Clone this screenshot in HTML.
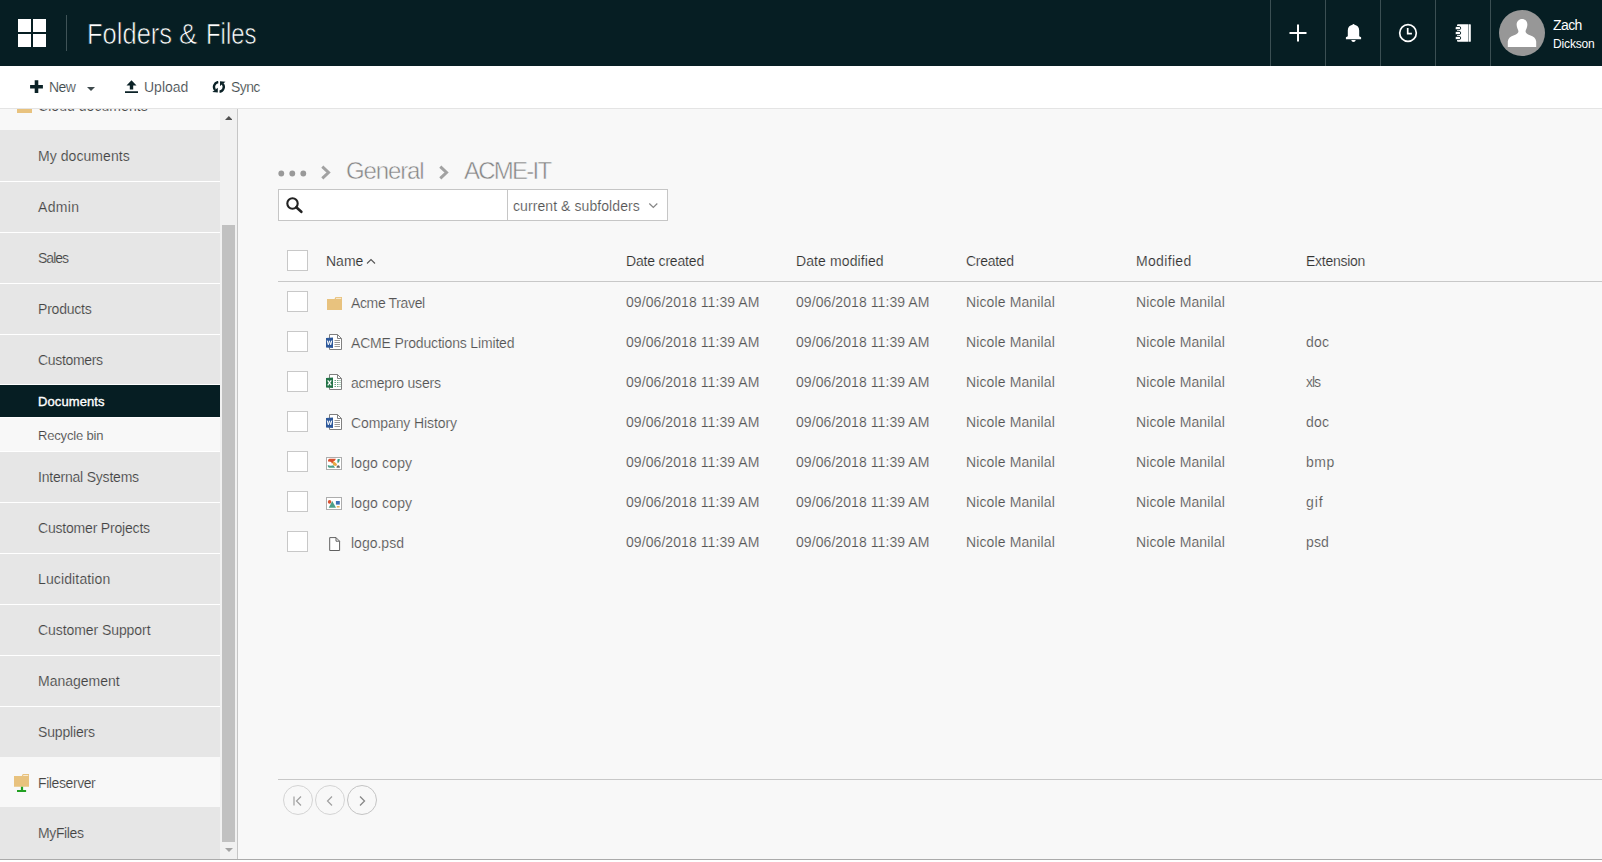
<!DOCTYPE html>
<html>
<head>
<meta charset="utf-8">
<title>Folders &amp; Files</title>
<style>
*{box-sizing:border-box;margin:0;padding:0}
html,body{width:1602px;height:862px;overflow:hidden;background:#fff;font-family:"Liberation Sans",sans-serif;font-size:14px;color:#444}
.abs{position:absolute}
div{white-space:nowrap}
#hdr{position:absolute;left:0;top:0;width:1602px;height:66px;background:#061e23}
.vd{position:absolute;top:0;width:1px;height:66px;background:#3b4f53}
.title{position:absolute;font-size:30px;line-height:36px;color:#fff;-webkit-text-stroke:0.7px #061e23;transform-origin:0 0}
.un{position:absolute;color:#fff}
#tb{position:absolute;left:0;top:66px;width:1602px;height:42px;background:#fff}
#tbline{position:absolute;left:0;top:108px;width:1602px;height:1px;background:#e4e4e4}
.tbt{position:absolute;line-height:18px;font-size:14px;color:#3f4a4d;-webkit-text-stroke:0.15px #fff}
#side{position:absolute;left:0;top:109px;width:220px;height:750px;background:#f8f8f8}
.si{position:absolute;left:0;width:220px;height:50px;background:#e6e6e6}
.st{position:absolute;line-height:18px;font-size:14px;color:#444;-webkit-text-stroke:0.15px #e6e6e6}
.lt{-webkit-text-stroke:0.15px #f8f8f8}
.sx{position:absolute;left:0;width:220px}
.sep{position:absolute;left:0;width:220px;height:1px;background:#fff}
#sb{position:absolute;left:220px;top:109px;width:17px;height:750px;background:#f1f1f1}
#sbt{position:absolute;left:222px;top:225px;width:13px;height:617px;background:#c1c1c1}
#sbr{position:absolute;left:237px;top:109px;width:1px;height:750px;background:#c6c6c6}
#main{position:absolute;left:238px;top:109px;width:1364px;height:750px;background:#f8f8f8}
#bot{position:absolute;left:0;top:859px;width:1602px;height:1px;background:#ababab}
.bc{position:absolute;font-size:24px;line-height:30px;color:#858585;-webkit-text-stroke:0.5px #f8f8f8}
.th{position:absolute;line-height:18px;font-size:14px;color:#333;-webkit-text-stroke:0.15px #f8f8f8}
.cb{position:absolute;left:287px;width:21px;height:21px;background:#fff;border:1px solid #c8c8c8}
.td{position:absolute;line-height:18px;font-size:14px;color:#555;-webkit-text-stroke:0.15px #f8f8f8}
.hl{position:absolute;left:278px;width:1324px;height:1px;background:#c8c8c8}
.pg{position:absolute;top:785px;width:30px;height:30px;border-radius:50%;border:1px solid #d4d4d4}
</style>
</head>
<body>
<div id="hdr"></div>
<svg class="abs" style="left:18px;top:19px" width="28" height="28" viewBox="0 0 28 28"><path fill="#fff" d="M0 0h13v13H0zM15 0h13v13H15zM0 15h13v13H0zM15 15h13v13H15z"/></svg>
<div class="abs" style="left:66px;top:15px;width:1px;height:36px;background:#3f5357"></div>
<div id="t1" class="title" style="left:87.20px;top:15.5px;transform:scaleX(0.8510)">Folders</div>
<div id="t2" class="title" style="left:179.40px;top:15.5px;transform:scaleX(0.9100)">&amp;</div>
<div id="t3" class="title" style="left:205.50px;top:15.5px;transform:scaleX(0.7970)">Files</div>
<div class="vd" style="left:1270px"></div>
<div class="vd" style="left:1325px"></div>
<div class="vd" style="left:1380px"></div>
<div class="vd" style="left:1435px"></div>
<div class="vd" style="left:1490px"></div>
<svg class="abs" style="left:1289px;top:24px" width="18" height="18" viewBox="0 0 18 18"><path stroke="#fff" stroke-width="2" fill="none" d="M9 0.500v17M0.500 9h17"/></svg>
<svg class="abs" style="left:1345px;top:23px" width="17" height="20" viewBox="0 0 17 20"><path fill="#fff" d="M8.500 0.900c0.600 0 0.900 0.400 1 0.900c2.800 0.500 4.700 2.600 4.700 5.600v5.800l1.900 1v2h-15.200v-2l1.900-1v-5.800c0-3 1.900-5.100 4.700-5.600c0.100-0.500 0.400-0.900 1-0.900zM6.300 17h4.400c-0.200 1.200-1 2-2.200 2s-2-0.800-2.200-2z"/></svg>
<svg class="abs" style="left:1398px;top:23px" width="20" height="20" viewBox="0 0 20 20"><circle cx="10" cy="10" r="8.300" fill="none" stroke="#fff" stroke-width="1.700"/><path d="M9.700 5v5.600h4.200" fill="none" stroke="#fff" stroke-width="1.700"/></svg>
<svg class="abs" style="left:1455px;top:24px" width="17" height="18" viewBox="0 0 17 18"><path fill="#fff" d="M3 0.200h10v17.600h-10a1 1 0 0 1-1-1v-15.600a1 1 0 0 1 1-1zM14 0.200h1.200a0.600 0.600 0 0 1 0.600 0.600v16.400a0.600 0.600 0 0 1-0.600 0.600h-1.200z"/><path fill="#8d999b" d="M13 0.200h1v17.600h-1z"/><g fill="#fff" stroke="#061e23" stroke-width="0.900"><rect x="0" y="2.500" width="5.700" height="3.200" rx="1.600"/><rect x="0" y="7.400" width="5.700" height="3.200" rx="1.600"/><rect x="0" y="12.400" width="5.700" height="3.200" rx="1.600"/></g></svg>
<svg class="abs" style="left:1499px;top:10px" width="46" height="46" viewBox="0 0 46 46"><circle cx="23" cy="23" r="23" fill="#979797"/><path transform="translate(23 0) scale(0.960 1) translate(-23 0)" fill="#fff" d="M23 9c3.200 0 5.600 2.400 5.600 5.800c0 1.300-0.400 2.300-0.700 3.300c-0.400 1.300-1.200 2.300-1.200 3.500c0 1.600 1.700 2.700 4.600 3.700c3.800 1.300 6 2.900 6.500 6.200v5.500h-29.600v-5.500c0.500-3.300 2.700-4.900 6.500-6.200c2.900-1 4.600-2.100 4.600-3.700c0-1.200-0.800-2.200-1.200-3.500c-0.300-1-0.700-2-0.700-3.300c0-3.400 2.400-5.800 5.600-5.800z"/></svg>
<div id="zach" class="un" style="left:1553px;top:17px;letter-spacing:-0.600px;font-size:14px;line-height:17px;">Zach</div>
<div id="dickson" class="un" style="left:1553px;top:36.7px;letter-spacing:-0.150px;font-size:12px;line-height:15px;">Dickson</div>
<div id="tb"></div><div id="tbline"></div>
<svg class="abs" style="left:30px;top:80px" width="13" height="13" viewBox="0 0 13 13"><path fill="#0b2227" d="M4.700 0.300h3.600v4.600h4.600v3.600h-4.600v4.500h-3.600v-4.500h-4.600v-3.600h4.600z"/></svg>
<div id="new" class="tbt" style="left:49px;top:78px;letter-spacing:-0.630px;">New</div>
<svg class="abs" style="left:87px;top:87px" width="8" height="4" viewBox="0 0 8 4"><path fill="#3f4a4d" d="M0 0h8l-4 4z"/></svg>
<svg class="abs" style="left:125px;top:80px" width="13" height="13" viewBox="0 0 13 13"><path fill="#0b2227" d="M6.500 0.300l5 5.200h-3.300v4h-3.400v-4h-3.300zM0 11.200h13v1.800h-13z"/></svg>
<div id="upload" class="tbt" style="left:144px;top:78px;">Upload</div>
<svg class="abs" style="left:212px;top:80.500px" width="14" height="12" viewBox="0 0 14 12"><g fill="none" stroke="#0b2227" stroke-width="2.400"><path d="M6.250 1.040A4.900 4.900 0 0 0 3.150 9.050"/><path d="M7.550 10.760A4.900 4.900 0 0 0 10.650 2.750"/></g><path fill="#0b2227" d="M0.300 11L5.800 11.500L5.800 6.800zM13.500 0.800L8 0.300L8 5z"/></svg>
<div id="sync" class="tbt" style="left:231px;top:78px;letter-spacing:-0.600px;">Sync</div>
<div id="side"></div>
<svg class="abs" style="left:17px;top:109px" width="15" height="4" viewBox="0 0 15 4"><rect width="15" height="4" fill="#e8c27e"/></svg>
<div class="abs" style="left:0;top:109px;width:220px;height:8px;overflow:hidden"><div class="st lt" style="left:38px;top:-11.700px;letter-spacing:0.05px">Cloud documents</div></div>
<div class="si" style="top:130px;height:51px"></div>
<div id="s0" class="st" style="left:38px;top:147px;letter-spacing:0.065px;">My documents</div>
<div class="si" style="top:182px;height:50px"></div>
<div id="s1" class="st" style="left:38px;top:198px;letter-spacing:0.338px;">Admin</div>
<div class="si" style="top:233px;height:50px"></div>
<div id="s2" class="st" style="left:38px;top:249px;letter-spacing:-0.991px;">Sales</div>
<div class="si" style="top:284px;height:50px"></div>
<div id="s3" class="st" style="left:38px;top:300px;letter-spacing:-0.206px;">Products</div>
<div class="si" style="top:335px;height:49px"></div>
<div id="s4" class="st" style="left:38px;top:351px;letter-spacing:-0.326px;">Customers</div>
<div class="sx" style="top:385px;height:32px;background:#061e23"></div>
<div id="sdoc" class="st" style="left:38px;top:392.8px;letter-spacing:0.090px;color:#fff;font-size:13px;-webkit-text-stroke:0.35px #fff;">Documents</div>
<div class="sx" style="top:418px;height:34px;background:#f8f8f8"></div>
<div id="srec" class="st lt" style="left:38px;top:426.8px;letter-spacing:-0.171px;font-size:13px;">Recycle bin</div>
<div class="si" style="top:452px"></div>
<div id="t0" class="st" style="left:38px;top:468px;letter-spacing:-0.210px;">Internal Systems</div>
<div class="si" style="top:503px"></div>
<div id="t1" class="st" style="left:38px;top:519px;letter-spacing:-0.191px;">Customer Projects</div>
<div class="si" style="top:554px"></div>
<div id="t2" class="st" style="left:38px;top:570px;letter-spacing:0.131px;">Luciditation</div>
<div class="si" style="top:605px"></div>
<div id="t3" class="st" style="left:38px;top:621px;letter-spacing:-0.072px;">Customer Support</div>
<div class="si" style="top:656px"></div>
<div id="t4" class="st" style="left:38px;top:672px;">Management</div>
<div class="si" style="top:707px"></div>
<div id="t5" class="st" style="left:38px;top:723px;letter-spacing:-0.169px;">Suppliers</div>
<div class="sx" style="top:757px;height:50px;background:#f8f8f8"></div>
<div id="sfs" class="st lt" style="left:38px;top:774px;letter-spacing:-0.410px;">Fileserver</div>
<div class="si" style="top:807px;height:52px"></div>
<div id="smf" class="st" style="left:38px;top:824px;letter-spacing:-0.390px;">MyFiles</div>
<div class="sep" style="top:181px"></div>
<div class="sep" style="top:232px"></div>
<div class="sep" style="top:283px"></div>
<div class="sep" style="top:334px"></div>
<div class="sep" style="top:384px"></div>
<div class="sep" style="top:417px"></div>
<div class="sep" style="top:451px"></div>
<div class="sep" style="top:502px"></div>
<div class="sep" style="top:553px"></div>
<div class="sep" style="top:604px"></div>
<div class="sep" style="top:655px"></div>
<div class="sep" style="top:706px"></div>
<div id="sb"></div><div id="sbt"></div><div id="sbr"></div><div id="main"></div><div id="bot"></div>
<svg class="abs" style="left:224.700px;top:116px" width="7.600" height="4" viewBox="0 0 8 4" preserveAspectRatio="none"><path fill="#505050" d="M0 4l4-4l4 4z"/></svg>
<svg class="abs" style="left:225px;top:848px" width="8" height="4" viewBox="0 0 8 4"><path fill="#a3a3a3" d="M0 0h8l-4 4z"/></svg>
<svg class="abs" style="left:14px;top:774px" width="15" height="18" viewBox="0 0 15 18"><path fill="#e8c27e" d="M0 2.100h7.800l1-2.100h6.200v12.800h-15z"/><rect x="9.200" y="1" width="5" height="0.900" fill="#fbf0dc"/><path fill="#22a022" d="M6.900 12.800h2.200v3.300h3v2h-9.100v-2h3.900z"/></svg>
<svg class="abs" style="left:278px;top:170px" width="29" height="7" viewBox="0 0 29 7"><g fill="#999"><circle cx="3.300" cy="3.500" r="2.900"/><circle cx="14.300" cy="3.500" r="2.900"/><circle cx="25.300" cy="3.500" r="2.900"/></g></svg>
<svg class="abs" style="left:320px;top:165px" width="12" height="15" viewBox="0 0 12 15"><path d="M2.300 1.700l6.200 5.800l-6.200 5.800" fill="none" stroke="#a2a2a2" stroke-width="3"/></svg>
<div id="bc1" class="bc" style="left:346px;top:156px;letter-spacing:-1.140px;">General</div>
<svg class="abs" style="left:438px;top:165px" width="12" height="15" viewBox="0 0 12 15"><path d="M2.300 1.700l6.200 5.800l-6.200 5.800" fill="none" stroke="#a2a2a2" stroke-width="3"/></svg>
<div id="bc2" class="bc" style="left:464px;top:156px;letter-spacing:-1.770px;">ACME-IT</div>
<div class="abs" style="left:278px;top:189px;width:390px;height:32px;background:#fff;border:1px solid #c6c6c6"></div>
<div class="abs" style="left:507px;top:190px;width:1px;height:30px;background:#c6c6c6"></div>
<svg class="abs" style="left:285px;top:196px" width="18" height="18" viewBox="0 0 18 18"><circle cx="7.500" cy="7.500" r="5.200" fill="none" stroke="#222" stroke-width="2.100"/><path d="M11.300 11.300l5 4.500" stroke="#222" stroke-width="2.600" stroke-linecap="round"/></svg>
<div id="sel" class="td" style="left:513px;top:197.4px;letter-spacing:0.076px;-webkit-text-stroke:0.15px #fff;">current &amp; subfolders</div>
<svg class="abs" style="left:648px;top:202px" width="11" height="8" viewBox="0 0 11 8"><path d="M1.300 1.500l4 4l4-4" fill="none" stroke="#858585" stroke-width="1.200"/></svg>
<div class="cb" style="top:250px"></div>
<div id="h0" class="th" style="left:326px;top:252px;">Name</div>
<div id="h1" class="th" style="left:626px;top:252px;letter-spacing:-0.180px;">Date created</div>
<div id="h2" class="th" style="left:796px;top:252px;letter-spacing:0.105px;">Date modified</div>
<div id="h3" class="th" style="left:966px;top:252px;letter-spacing:-0.300px;">Created</div>
<div id="h4" class="th" style="left:1136px;top:252px;letter-spacing:0.334px;">Modified</div>
<div id="h5" class="th" style="left:1306px;top:252px;letter-spacing:-0.270px;">Extension</div>
<svg class="abs" style="left:366px;top:258px" width="10" height="7" viewBox="0 0 10 7"><path d="M1 5.500l4-4l4 4" fill="none" stroke="#555" stroke-width="1.100"/></svg>
<div class="hl" style="top:281px"></div>
<div class="cb" style="top:291px"></div>
<svg class="abs" style="left:327px;top:297px" width="15" height="13" viewBox="0 0 15 13"><path fill="#e8c27e" d="M0 2h7.500l1-2h6.500v13h-15z"/><rect x="9" y="0.900" width="5.200" height="0.900" fill="#fbf0dc"/></svg>
<div id="n0" class="td" style="left:351px;top:294px;letter-spacing:-0.360px;">Acme Travel</div>
<div id="dc0" class="td" style="left:626px;top:293px;letter-spacing:0.075px;">09/06/2018 11:39 AM</div>
<div id="dc0_m0" class="td" style="left:796px;top:293px;letter-spacing:0.075px;">09/06/2018 11:39 AM</div>
<div id="nm0" class="td" style="left:966px;top:293px;letter-spacing:0.124px;">Nicole Manilal</div>
<div id="nm0_b0" class="td" style="left:1136px;top:293px;letter-spacing:0.124px;">Nicole Manilal</div>
<div class="cb" style="top:331px"></div>
<svg class="abs" style="left:326px;top:334px" width="16" height="16" viewBox="0 0 16 16"><path fill="#fff" stroke="#808080" stroke-width="1" d="M3.500 0.500h8l4 4v11h-12z"/><path fill="none" stroke="#808080" stroke-width="1" d="M11.500 0.500v4h4"/><path stroke="#9a9a9a" stroke-width="1" d="M8.500 6.500h5.500M8.500 8.500h5.500M8.500 10.500h5.500M8.500 12.500h5.500"/><path fill="#2b579a" d="M0 4l7-0.600v10.700l-7-0.700z"/><path fill="none" stroke="#fff" stroke-width="1" d="M1.200 6.500l1.100 4.300l1.200-4l1.200 4l1.100-4.300"/></svg>
<div id="n1" class="td" style="left:351px;top:334px;letter-spacing:-0.164px;">ACME Productions Limited</div>
<div id="dc0_1" class="td" style="left:626px;top:333px;letter-spacing:0.075px;">09/06/2018 11:39 AM</div>
<div id="dc0_m1" class="td" style="left:796px;top:333px;letter-spacing:0.075px;">09/06/2018 11:39 AM</div>
<div id="nm0_1" class="td" style="left:966px;top:333px;letter-spacing:0.124px;">Nicole Manilal</div>
<div id="nm0_b1" class="td" style="left:1136px;top:333px;letter-spacing:0.124px;">Nicole Manilal</div>
<div id="e1" class="td" style="left:1306px;top:333px;letter-spacing:0.180px;">doc</div>
<div class="cb" style="top:371px"></div>
<svg class="abs" style="left:326px;top:374px" width="16" height="16" viewBox="0 0 16 16"><path fill="#fff" stroke="#808080" stroke-width="1" d="M3.500 0.500h8l4 4v11h-12z"/><path fill="none" stroke="#808080" stroke-width="1" d="M11.500 0.500v4h4"/><path stroke="#6aa583" stroke-width="1" stroke-dasharray="1.500 1" d="M8.500 6.500h6M8.500 8.500h6M8.500 10.500h6M8.500 12.500h6"/><path fill="#217346" d="M0 4l7-0.600v10.700l-7-0.700z"/><path fill="none" stroke="#fff" stroke-width="1.200" d="M1.700 6.300l3.600 5M5.300 6.300l-3.600 5"/></svg>
<div id="n2" class="td" style="left:351px;top:374px;letter-spacing:-0.225px;">acmepro users</div>
<div id="dc0_2" class="td" style="left:626px;top:373px;letter-spacing:0.075px;">09/06/2018 11:39 AM</div>
<div id="dc0_m2" class="td" style="left:796px;top:373px;letter-spacing:0.075px;">09/06/2018 11:39 AM</div>
<div id="nm0_2" class="td" style="left:966px;top:373px;letter-spacing:0.124px;">Nicole Manilal</div>
<div id="nm0_b2" class="td" style="left:1136px;top:373px;letter-spacing:0.124px;">Nicole Manilal</div>
<div id="e2" class="td" style="left:1306px;top:373px;letter-spacing:-1.080px;">xls</div>
<div class="cb" style="top:411px"></div>
<svg class="abs" style="left:326px;top:414px" width="16" height="16" viewBox="0 0 16 16"><path fill="#fff" stroke="#808080" stroke-width="1" d="M3.500 0.500h8l4 4v11h-12z"/><path fill="none" stroke="#808080" stroke-width="1" d="M11.500 0.500v4h4"/><path stroke="#9a9a9a" stroke-width="1" d="M8.500 6.500h5.500M8.500 8.500h5.500M8.500 10.500h5.500M8.500 12.500h5.500"/><path fill="#2b579a" d="M0 4l7-0.600v10.700l-7-0.700z"/><path fill="none" stroke="#fff" stroke-width="1" d="M1.200 6.500l1.100 4.300l1.200-4l1.200 4l1.100-4.300"/></svg>
<div id="n3" class="td" style="left:351px;top:414px;letter-spacing:-0.096px;">Company History</div>
<div id="dc0_3" class="td" style="left:626px;top:413px;letter-spacing:0.075px;">09/06/2018 11:39 AM</div>
<div id="dc0_m3" class="td" style="left:796px;top:413px;letter-spacing:0.075px;">09/06/2018 11:39 AM</div>
<div id="nm0_3" class="td" style="left:966px;top:413px;letter-spacing:0.124px;">Nicole Manilal</div>
<div id="nm0_b3" class="td" style="left:1136px;top:413px;letter-spacing:0.124px;">Nicole Manilal</div>
<div id="e3" class="td" style="left:1306px;top:413px;letter-spacing:0.180px;">doc</div>
<div class="cb" style="top:451px"></div>
<svg class="abs" style="left:326px;top:457px" width="16" height="13" viewBox="0 0 16 13"><rect x="0.500" y="0.500" width="15" height="12" fill="#fff" stroke="#adadad"/><path fill="#d9502f" d="M2 3.500c0-1.200 1-1.700 2.500-1.700h5.300c-0.300 1.400-1.200 2.200-2.300 2.400c0.200 1.300-0.600 2.200-1.700 2.200c0-1.200-0.800-1.700-2-1.700c-1.100 0-1.800-0.400-1.800-1.200z"/><path fill="#3f9b86" d="M11.700 1.900h2.100c0 1.800-0.700 3.400-2 4.400c-0.600-1.300-0.600-3 -0.100-4.400z"/><path fill="#e9a944" d="M7.300 3.900c1.200 1.300 2.800 1.800 3.500 3c0.500 1-0.300 2-1.600 2c-1.600 0-2.600-1.300-2.500-2.800c0-0.900 0.200-1.600 0.600-2.200z"/><path fill="#4c9e88" d="M1.800 8c1.500 0.800 4 0.800 5.600 0.300c0.500 0.900 1 1.700 1.700 2.400h-5.800c-1 0-1.600-1-1.500-2.700z"/><path fill="#666" d="M10.500 10.700c0-1.400 0.800-2.400 1.800-2.400c0.900 0 1.600 1 1.600 2.400z"/></svg>
<div id="n4" class="td" style="left:351px;top:454px;letter-spacing:0.146px;">logo copy</div>
<div id="dc0_4" class="td" style="left:626px;top:453px;letter-spacing:0.075px;">09/06/2018 11:39 AM</div>
<div id="dc0_m4" class="td" style="left:796px;top:453px;letter-spacing:0.075px;">09/06/2018 11:39 AM</div>
<div id="nm0_4" class="td" style="left:966px;top:453px;letter-spacing:0.124px;">Nicole Manilal</div>
<div id="nm0_b4" class="td" style="left:1136px;top:453px;letter-spacing:0.124px;">Nicole Manilal</div>
<div id="e4" class="td" style="left:1306px;top:453px;letter-spacing:0.495px;">bmp</div>
<div class="cb" style="top:491px"></div>
<svg class="abs" style="left:326px;top:497px" width="16" height="13" viewBox="0 0 16 13"><rect x="0.500" y="0.500" width="15" height="12" fill="#fff" stroke="#adadad"/><circle cx="3.600" cy="4.900" r="1.800" fill="#d9502f"/><path fill="#4c9e88" d="M2.700 10.800l3.600-6.700l3.700 6.700z"/><rect x="9.900" y="4" width="3.900" height="3.600" fill="#3c6fb5"/><rect x="10.800" y="9.100" width="2.800" height="1.400" fill="#e9a944"/></svg>
<div id="n5" class="td" style="left:351px;top:494px;letter-spacing:0.146px;">logo copy</div>
<div id="dc0_5" class="td" style="left:626px;top:493px;letter-spacing:0.075px;">09/06/2018 11:39 AM</div>
<div id="dc0_m5" class="td" style="left:796px;top:493px;letter-spacing:0.075px;">09/06/2018 11:39 AM</div>
<div id="nm0_5" class="td" style="left:966px;top:493px;letter-spacing:0.124px;">Nicole Manilal</div>
<div id="nm0_b5" class="td" style="left:1136px;top:493px;letter-spacing:0.124px;">Nicole Manilal</div>
<div id="e5" class="td" style="left:1306px;top:493px;letter-spacing:0.900px;">gif</div>
<div class="cb" style="top:531px"></div>
<svg class="abs" style="left:329px;top:536.5px" width="12" height="15" viewBox="0 0 12 15"><path fill="#fff" stroke="#606060" stroke-width="1" d="M0.700 0.600h6.300l3.600 3.600v9.300h-9.900z"/><path fill="none" stroke="#606060" stroke-width="1" d="M7 0.600v3.600h3.600"/></svg>
<div id="n6" class="td" style="left:351px;top:534px;">logo.psd</div>
<div id="dc0_6" class="td" style="left:626px;top:533px;letter-spacing:0.075px;">09/06/2018 11:39 AM</div>
<div id="dc0_m6" class="td" style="left:796px;top:533px;letter-spacing:0.075px;">09/06/2018 11:39 AM</div>
<div id="nm0_6" class="td" style="left:966px;top:533px;letter-spacing:0.124px;">Nicole Manilal</div>
<div id="nm0_b6" class="td" style="left:1136px;top:533px;letter-spacing:0.124px;">Nicole Manilal</div>
<div id="e6" class="td" style="left:1306px;top:533px;letter-spacing:0.135px;">psd</div>
<div class="hl" style="top:779px"></div>
<div class="pg" style="left:283px"></div><div class="pg" style="left:315px"></div><div class="pg" style="left:347px;border-color:#c4c4c4"></div>
<svg class="abs" style="left:292px;top:794.700px" width="12" height="12" viewBox="0 0 12 12"><path d="M2 1.500v9M9 1.500l-4.500 4.500l4.500 4.500" fill="none" stroke="#a0a0a0" stroke-width="1.200"/></svg>
<svg class="abs" style="left:324px;top:794.700px" width="12" height="12" viewBox="0 0 12 12"><path d="M8 1.500l-4.500 4.500l4.500 4.500" fill="none" stroke="#a0a0a0" stroke-width="1.200"/></svg>
<svg class="abs" style="left:356px;top:794.700px" width="12" height="12" viewBox="0 0 12 12"><path d="M4 1.500l4.500 4.500l-4.500 4.500" fill="none" stroke="#888" stroke-width="1.300"/></svg>
</body>
</html>
